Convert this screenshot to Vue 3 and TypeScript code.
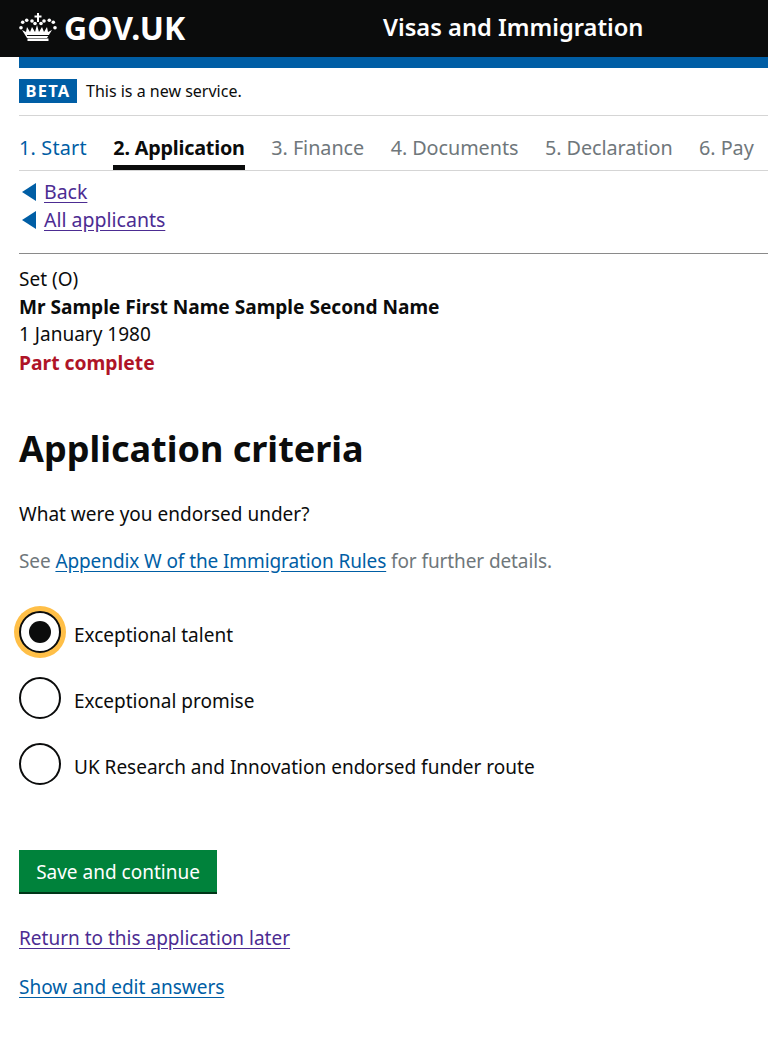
<script setup lang="ts">
const steps = [
  { label: '1. Start', state: 'done' },
  { label: '2. Application', state: 'current' },
  { label: '3. Finance', state: 'todo' },
  { label: '4. Documents', state: 'todo' },
  { label: '5. Declaration', state: 'todo' },
  { label: '6. Pay', state: 'todo' },
]
const options = [
  { label: 'Exceptional talent', checked: true },
  { label: 'Exceptional promise', checked: false },
  { label: 'UK Research and Innovation endorsed funder route', checked: false },
]
const jewels = [
  [2, 14.7], [3.7, 9.3], [7.7, 7.3], [13, 8], [16, 10.5], [22, 10.5], [25, 8], [30.3, 7.3], [34.3, 9.3], [36, 14.7],
]
</script>

<template>
  <div class="page">
    <header class="masthead">
      <div class="brand">
        <svg class="crown" viewBox="0 0 38 28" aria-hidden="true">
          <circle v-for="(j, i) in jewels" :key="i" :cx="j[0]" :cy="j[1]" r="1.8" fill="#fff" />
          <path d="M18 0h2v2.5h2.5v2H20V9h-2V4.5h-2.5v-2H18z" fill="#fff" />
          <path d="M3 17l4 2 1-5 3 5 2-5 3 5 2-7 2 7 3-5 2 5 3-5 1 5 4-2-5 8H8z" fill="#fff" />
          <path d="M8 22.5h22" stroke="#0b0c0c" stroke-width="1" fill="none" />
          <path d="M8.5 25.5h21V28h-21z" fill="#fff" />
        </svg>
        <span class="wordmark">GOV.UK</span>
      </div>
      <div class="service">Visas and Immigration</div>
    </header>

    <main class="content">
      <div class="blue-bar"></div>
      <div class="phase">
        <strong class="tag">BETA</strong>
        <span class="phase-text">This is a new service.</span>
      </div>

      <nav class="steps">
        <span v-for="s in steps" :key="s.label" class="step" :class="s.state">{{ s.label }}</span>
      </nav>

      <div class="back-links">
        <div class="back"><i class="arrow"></i><a href="#" class="visited">Back</a></div>
        <div class="back"><i class="arrow"></i><a href="#" class="visited">All applicants</a></div>
      </div>

      <section class="summary">
        <div>Set (O)</div>
        <div class="bold">Mr Sample First Name Sample Second Name</div>
        <div>1 January 1980</div>
        <div class="bold red">Part complete</div>
      </section>

      <h1>Application criteria</h1>
      <p class="question">What were you endorsed under?</p>
      <p class="hint">See <a href="#" class="link">Appendix W of the Immigration Rules</a> for further details.</p>

      <div class="radios">
        <label v-for="o in options" :key="o.label" class="radio">
          <span class="ring" :class="{ focused: o.checked }"><span v-if="o.checked" class="dot"></span></span>
          <span class="radio-label">{{ o.label }}</span>
        </label>
      </div>

      <button class="save" type="button">Save and continue</button>
      <p class="later"><a href="#" class="visited">Return to this application later</a></p>
      <p class="answers"><a href="#" class="link">Show and edit answers</a></p>
    </main>
  </div>
</template>

<style>
html, body { margin: 0; background: #fff; }
</style>

<style scoped>
.page {
  width: 768px;
  height: 1038px;
  overflow: hidden;
  font-family: "Noto Sans", "Liberation Sans", sans-serif;
  font-size: 19px;
  line-height: 27.5px;
  color: #0b0c0c;
}
.masthead {
  height: 57px;
  background: #0b0c0c;
  color: #fff;
  display: flex;
  align-items: center;
  padding-left: 19px;
}
.brand { width: 364px; display: flex; align-items: center; gap: 7px; }
.crown { width: 38px; height: 28px; margin-bottom: 3px; }
.wordmark { font-size: 32px; font-weight: 700; line-height: 40px; margin-top: -1px; }
.service { font-size: 23.7px; font-weight: 600; margin-top: -1px; }
.content { padding-left: 19px; }
.blue-bar { height: 11px; background: #005ea5; }
.phase {
  height: 48px;
  box-sizing: border-box;
  border-bottom: 1px solid #d5d5d5;
  display: flex;
  align-items: center;
  gap: 9px;
  font-size: 16px;
  padding-bottom: 1px;
}
.phase-text { padding-top: 2px; }
.tag {
  background: #005ea5;
  color: #fff;
  width: 58px;
  height: 24px;
  line-height: 24px;
  text-align: center;
  font-size: 16.5px;
  letter-spacing: 1.3px;
}
.steps {
  height: 55px;
  box-sizing: border-box;
  border-bottom: 1px solid #d5d5d5;
  display: flex;
  gap: 26.5px;
  font-size: 19.8px;
}
.step { box-sizing: border-box; height: 54px; padding-top: 18px; white-space: nowrap; }
.step.done { color: #005ea5; letter-spacing: 0.2px; }
.step.todo { color: #6f777b; letter-spacing: -0.05px; }
.step.current { font-weight: 700; letter-spacing: -0.2px; border-bottom: 5px solid #0b0c0c; }
.back-links {
  padding-top: 7px;
  height: 83px;
  box-sizing: border-box;
  border-bottom: 1px solid #8a8a8a;
  font-size: 19.5px;
}
.back { display: flex; align-items: center; gap: 8px; height: 28px; }
.arrow {
  width: 0; height: 0;
  margin-left: 3px;
  border-style: solid;
  border-width: 9.5px 14px 9.5px 0;
  border-color: transparent #005ea5 transparent transparent;
}
a { text-underline-offset: 3px; }
.visited { color: #4c2c92; }
.link { color: #005ea5; }
.summary { padding-top: 12px; }
.bold { font-weight: 700; font-size: 19.1px; }
.red { color: #af1427; font-size: 19.3px; }
h1 { margin: 49px 0 0; font-size: 36px; line-height: 48px; font-weight: 700; }
.question { margin: 28px 0 0; }
.hint { margin: 19px 0 0; color: #6f777b; letter-spacing: -0.1px; }
.radios { margin-top: 36px; display: flex; flex-direction: column; gap: 24px; }
.radio { display: flex; align-items: center; gap: 13px; height: 42px; }
.radio-label { padding-top: 7px; }
.ring {
  width: 42px; height: 42px;
  box-sizing: border-box;
  border: 2px solid #0b0c0c;
  border-radius: 50%;
  display: flex;
  align-items: center;
  justify-content: center;
  background: #fff;
  flex: none;
}
.ring.focused { box-shadow: 0 0 0 5px #ffbf47; }
.dot { width: 22px; height: 22px; border-radius: 50%; background: #0b0c0c; }
.save {
  display: block;
  margin-top: 65px;
  width: 198px;
  height: 44px;
  border: 0;
  border-bottom: 2px solid #003618;
  background: #00823b;
  color: #fff;
  font: inherit;
  padding: 4px 0 0;
}
.later { margin: 31px 0 0; }
.answers { margin: 21px 0 0; }
</style>
